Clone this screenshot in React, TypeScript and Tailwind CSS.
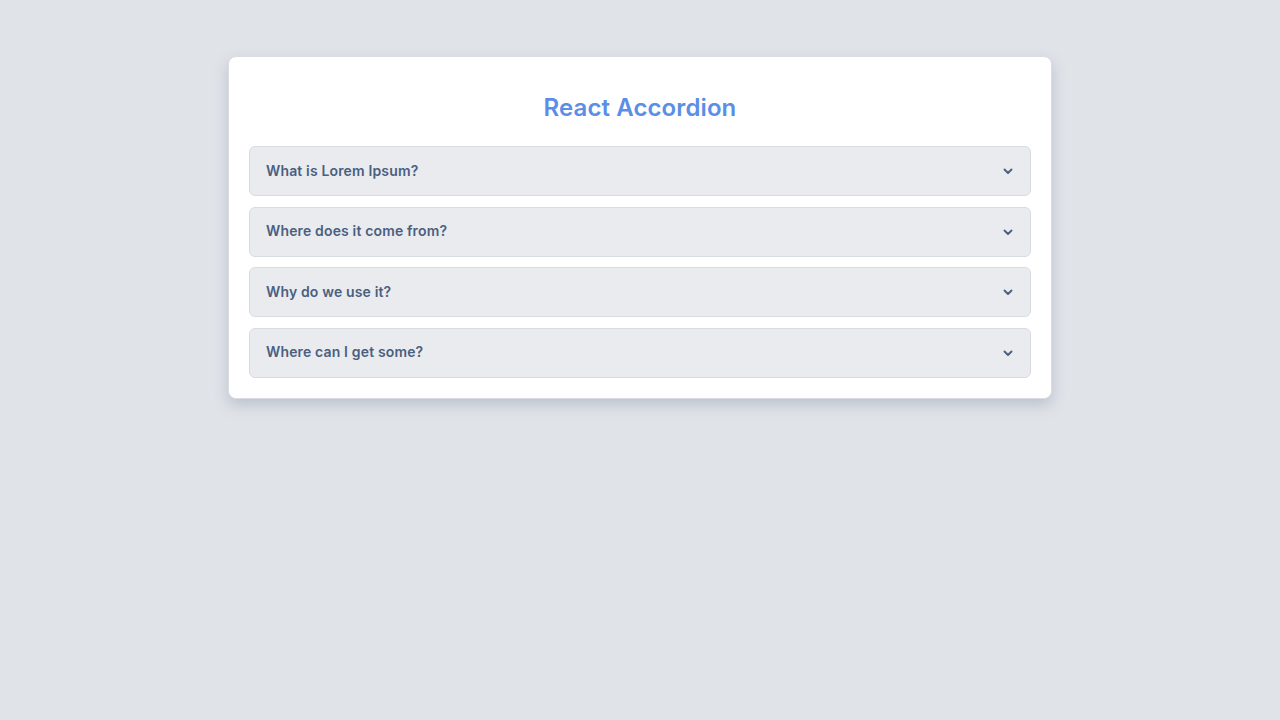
import React from "react";

const items = [
  "What is Lorem Ipsum?",
  "Where does it come from?",
  "Why do we use it?",
  "Where can I get some?",
];

function Chevron() {
  return (
    <svg width="12" height="12" viewBox="0 0 24 24" fill="none" stroke="#4b5f7f" strokeWidth="3.8" strokeLinecap="round" strokeLinejoin="round">
      <path d="M5 9l7 7 7-7" />
    </svg>
  );
}

export default function App() {
  return (
    <div className="min-h-screen w-full bg-[#e0e3e8] pt-[56px]" style={{ fontFamily: "Inter, 'Noto Sans', sans-serif" }}>
      <div className="mx-auto w-[824px] rounded-[8px] border border-[#d9dde3] bg-white px-[20px] pb-[20px] pt-[21px] shadow-[0_6px_14px_rgba(120,135,160,0.35)]">
        <div className="flex h-[60px] items-center justify-center mb-[8px]">
          <h1 className="text-[24px] font-semibold text-[#5b8ee6] tracking-[0.1px]">React Accordion</h1>
        </div>
        <div className="flex flex-col gap-[10.67px]">
          {items.map((t) => (
            <div key={t} className="flex h-[50px] items-center justify-between rounded-[6px] border border-[#d8dbe1] bg-[#e9ebef] pl-[16px] pr-[16px]">
              <span className="text-[14px] font-semibold text-[#4b5f7f] tracking-[0.15px] -mt-[2px]">{t}</span>
              <Chevron />
            </div>
          ))}
        </div>
      </div>
    </div>
  );
}
